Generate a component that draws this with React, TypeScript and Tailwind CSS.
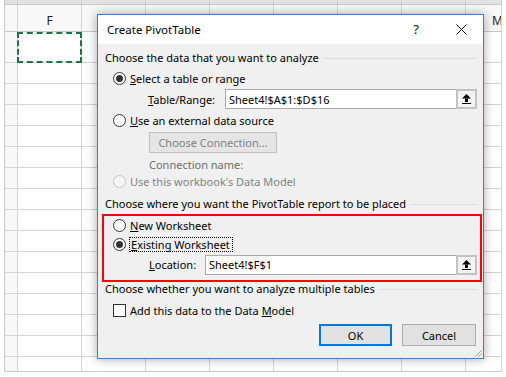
import React from "react";

const FONT = "font-['Noto_Sans',sans-serif]";

function Radio({ checked = false, disabled = false }: { checked?: boolean; disabled?: boolean }) {
  return (
    <span
      className={
        "w-[13px] h-[13px] rounded-full border flex items-center justify-center shrink-0 " +
        (disabled ? "border-[#c4c4c4] bg-[#f4f4f4]" : "border-[#333333] bg-white")
      }
    >
      {checked && <span className="w-[7px] h-[7px] rounded-full bg-[#333333]" />}
    </span>
  );
}

function SectionHeader({ text, h = "h-[16px]" }: { text: string; h?: string }) {
  return (
    <div className={"flex items-center pl-[7px] pr-[6px] " + h}>
      <span className="whitespace-nowrap -mt-[1px]">{text}</span>
      <span className="flex-1 h-px bg-[#dcdcdc] ml-[5px]" />
    </div>
  );
}

function UpIcon() {
  return (
    <svg width="9" height="10" viewBox="0 0 9 10">
      <polygon points="4.5,0 0,4.5 9,4.5" fill="#000" />
      <rect x="3" y="4.5" width="3" height="3.5" fill="#000" />
      <rect x="0" y="9" width="9" height="1" fill="#000" />
    </svg>
  );
}

function RangeInput({ value, w }: { value: string; w: string }) {
  return (
    <div className={"flex h-[20px] border border-[#a9a9a9] bg-white " + w}>
      <div className="flex-1 flex items-center pl-[3px] text-black">{value}</div>
      <div className="w-[17px] border-2 border-[#c2c2c2] bg-[#f3f3f3] flex items-center justify-center -mr-px -my-px h-[16px] box-content">
        <UpIcon />
      </div>
    </div>
  );
}

const colWidths = [13, 64, 64, 64, 64, 64, 64, 64, 36];
const colW = ["w-[13px]", "w-[64px]", "w-[64px]", "w-[64px]", "w-[64px]", "w-[64px]", "w-[64px]", "w-[64px]", "w-[36px]"];

function Sheet() {
  const rows = Array.from({ length: 16 });
  return (
    <div className="ml-[4px] w-[498px] h-[372px] border-l border-b border-[#c8c8c8] overflow-hidden flex flex-col">
      <div className="h-[5px] shrink-0 flex bg-[#e2e2e2] border-b border-[#c8c8c8]">
        {colWidths.map((_, i) => (
          <div key={i} className={colW[i] + " h-full border-r border-[#cfcfcf] shrink-0"} />
        ))}
      </div>
      <div className="h-[27px] shrink-0 flex bg-[#f8f8f8] border-b border-[#c8c8c8] font-['Noto_Sans',sans-serif] text-[12px] text-[#222]">
        {colWidths.map((_, i) => (
          <div key={i} className={colW[i] + " h-full border-r border-[#d4d4d4] shrink-0 flex items-end justify-center pb-[1px] overflow-hidden"}>
            {i === 1 ? "F" : i === 8 ? <span className="self-end pl-[26px] w-full">M</span> : ""}
          </div>
        ))}
      </div>
      <div className="h-[31px] shrink-0 flex border-b border-[#d4d4d4] bg-white">
        {colWidths.map((_, i) => (
          <div key={i} className={colW[i] + " h-full border-r border-[#d4d4d4] shrink-0 " + (i === 0 ? "bg-[#f8f8f8]" : "")}>
            {i === 1 && <div className="w-[65px] h-[31px] -ml-px border-2 border-dashed border-[#217346]" />}
          </div>
        ))}
      </div>
      {rows.map((_, r) => (
        <div key={r} className="h-[21px] shrink-0 flex border-b border-[#d4d4d4] bg-white">
          {colWidths.map((_, i) => (
            <div key={i} className={colW[i] + " h-full border-r border-[#d4d4d4] shrink-0 " + (i === 0 ? "bg-[#f8f8f8]" : "")} />
          ))}
        </div>
      ))}
    </div>
  );
}

export default function App() {
  return (
    <div className={"relative w-[506px] h-[377px] bg-white overflow-hidden " + FONT}>
      <Sheet />
      <div className="absolute left-[97px] top-[14px] w-[387px] h-[345px] border border-[#3b7fcf] bg-[#f0f0f0] shadow-[0_0_10px_rgba(0,0,0,0.35)] flex flex-col text-[11px] text-black leading-none">
        {/* Title bar */}
        <div className="h-[29px] bg-white flex items-center pl-[9px] shrink-0">
          <span className="text-[11.5px] text-black">Create PivotTable</span>
          <span className="ml-auto w-[12px] text-center text-[13px] text-[#111] mr-[34px]">?</span>
          <svg width="11" height="11" viewBox="0 0 11 11" className="mr-[16px]">
            <path d="M0.5 0.5 L10.5 10.5 M10.5 0.5 L0.5 10.5" stroke="#111" strokeWidth="1" />
          </svg>
        </div>

        {/* Body */}
        <div className="flex flex-col">
          <div className="mt-[6px]">
            <SectionHeader text="Choose the data that you want to analyze" />
          </div>
          <div className="mt-[4px] h-[16px] flex items-center pl-[15px] gap-[4px]">
            <Radio checked />
            <span><u>S</u>elect a table or range</span>
          </div>
          <div className="mt-[3px] h-[20px] flex items-center pl-[50px]">
            <span className="w-[77px]"><u>T</u>able/Range:</span>
            <RangeInput value="Sheet4!$A$1:$D$16" w="w-[252px]" />
          </div>
          <div className="mt-[3px] h-[16px] flex items-center pl-[15px] gap-[4px]">
            <Radio />
            <span><u>U</u>se an external data source</span>
          </div>
          <div className="mt-[4px] pl-[51px]">
            <div className="w-[128px] h-[21px] border border-[#bfbfbf] bg-[#e5e5e5] text-[#838383] flex items-center justify-center">
              Choose Connection...
            </div>
          </div>
          <div className="mt-[3px] h-[16px] flex items-center pl-[51px] text-[#6d6d6d]">Connection name:</div>
          <div className="mt-[1px] h-[16px] flex items-center pl-[15px] gap-[4px] text-[#838383]">
            <Radio disabled />
            <span>Use this workbook's Data Model</span>
          </div>
          <div className="mt-[7px]">
            <SectionHeader text="Choose where you want the PivotTable report to be placed" />
          </div>
          {/* Red highlight */}
          <div className="mt-[2px] ml-[4px] w-[380px] border-2 border-[#ff0000] pb-[5px] flex flex-col">
            <div className="mt-[1px] h-[16px] flex items-center pl-[9px] gap-[4px]">
              <Radio />
              <span><u>N</u>ew Worksheet</span>
            </div>
            <div className="mt-[3px] h-[16px] flex items-center pl-[9px] gap-[3px]">
              <Radio checked />
              <span className="border border-dotted border-black pl-[1px] pr-[2px] h-[15px] flex items-center">
                <span><u>E</u>xisting Worksheet</span>
              </span>
            </div>
            <div className="mt-[2px] h-[21px] flex items-center pl-[45px]">
              <span className="w-[56px]"><u>L</u>ocation:</span>
              <RangeInput value="Sheet4!$F$1" w="w-[272px]" />
            </div>
          </div>
          <div>
            <SectionHeader text="Choose whether you want to analyze multiple tables" h="h-[14px]" />
          </div>
          <div className="mt-[6px] h-[16px] flex items-center pl-[15px] gap-[4px]">
            <span className="w-[13px] h-[13px] border border-[#333] bg-white shrink-0" />
            <span>Add this data to the Data <u>M</u>odel</span>
          </div>
          <div className="mt-[6px] flex justify-end pr-[7px] gap-[10px]">
            <div className="w-[73px] h-[22px] border-2 border-[#0078d7] bg-[#e1e1e1] flex items-center justify-center">OK</div>
            <div className="w-[74px] h-[22px] border border-[#adadad] bg-[#e1e1e1] flex items-center justify-center">Cancel</div>
          </div>
        </div>
        <svg width="9" height="9" viewBox="0 0 9 9" className="absolute right-[1px] bottom-[1px]">
          <path d="M8.5 2.5 L2.5 8.5 M8.5 5.5 L5.5 8.5" stroke="#a0a0a0" strokeWidth="1" />
        </svg>
      </div>
    </div>
  );
}
